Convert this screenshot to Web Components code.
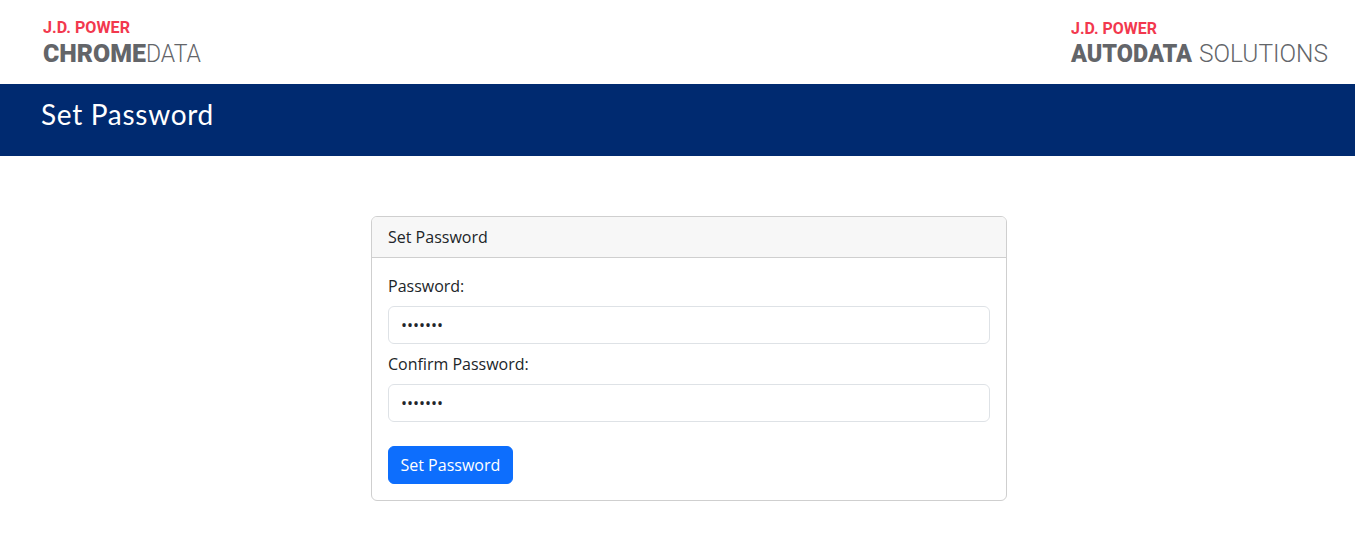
<!DOCTYPE html>
<html lang="en"><head><meta charset="utf-8"><title>Set Password</title>
<style>
html,body{margin:0;padding:0;background:#fff}
body{font:16px/24px "Open Sans",sans-serif;color:#212529}
</style></head><body>
<app-page>
  <site-logo slot="left" bold="CHROME" bold-w="103" light="DATA" light-w="55" gap="0" jd-w="87" drop="2"></site-logo>
  <site-logo slot="right" bold="AUTODATA" bold-w="121" light="SOLUTIONS" light-w="129" gap="7" jd-w="86" drop="1"></site-logo>
  <span slot="title">Set Password</span>
  <set-card heading="Set Password">
    <pw-field label="Password:"></pw-field>
    <pw-field label="Confirm Password:"></pw-field>
    <primary-button>Set Password</primary-button>
  </set-card>
</app-page>
<script>
const def=(name,html,setup)=>customElements.define(name,class extends HTMLElement{
  constructor(){super();this.attachShadow({mode:'open'}).innerHTML=html;}
  connectedCallback(){setup&&setup(this,this.shadowRoot);}
});
def('app-page',`<style>
:host{display:block}
.top{height:84px;display:flex;justify-content:space-between;align-items:flex-start;padding:0 27px 0 43px;box-sizing:border-box}
.top ::slotted([slot=left]){margin-top:18px}
.top ::slotted([slot=right]){margin-top:19px}
.banner{height:72px;background:#002a70;color:#fff;display:flex;align-items:center;padding:0 0 12px 41px;box-sizing:border-box;font:400 28px/36px Lato,sans-serif;letter-spacing:.7px}
.main{display:grid;grid-template-columns:636px;padding:60px 0 45px 371px}
</style>
<div class="top"><slot name="left"></slot><slot name="right"></slot></div>
<div class="banner"><slot name="title"></slot></div>
<div class="main"><slot></slot></div>`);
def('site-logo',`<style>
:host{display:block;font-family:Roboto,sans-serif;color:#636569}
.row{display:flex;white-space:nowrap}
.cell{display:block;overflow:visible}
.cell>span{display:inline-block;transform-origin:0 50%}
.jd{font-size:17px;line-height:18px;font-weight:700;color:#f2384e}
.p{font-size:26.5px;line-height:30px}
.b{font-weight:900}
.l{font-weight:300}
</style><div class="row jd"><div class="cell"><span>J.D. POWER</span></div></div><div class="row p"><div class="cell b"><span></span></div><div class="cell l"><span></span></div></div>`,(el,r)=>{
  const a=n=>el.getAttribute(n);
  const fit=(cell,w,txt)=>{
    const s=cell.firstElementChild;
    if(txt)s.textContent=txt;
    const n=s.getBoundingClientRect().width;
    cell.style.width=w+'px';
    s.style.transform='scaleX('+(w/n)+')';
  };
  fit(r.querySelector('.jd .cell'),+a('jd-w'));
  fit(r.querySelector('.b'),+a('bold-w'),a('bold'));
  fit(r.querySelector('.l'),+a('light-w'),a('light'));
  r.querySelector('.p').style.marginTop=a('drop')+'px';
  r.querySelector('.p').style.gap=a('gap')+'px';
});
def('set-card',`<style>
:host{display:block;border:1px solid #cfcfcf;border-radius:6px;overflow:hidden;background:#fff}
.h{padding:8px 16px;box-sizing:border-box;background:#f7f7f7;border-bottom:1px solid #cfcfcf;height:41px}
.b{padding:16px;display:flex;flex-direction:column}
</style><div class="h"></div><div class="b"><slot></slot></div>`,(el,r)=>{
  r.querySelector('.h').textContent=el.getAttribute('heading');
});
def('pw-field',`<style>
:host{display:flex;flex-direction:column;margin-bottom:8px}
label{display:block;margin-bottom:8px;line-height:24px}
input{display:block;box-sizing:border-box;width:100%;height:38px;padding:6px 12px;border:1px solid #dee2e6;border-radius:6px;font:16px/24px "Open Sans",sans-serif;color:#212529;background:#fff;outline:0;margin:0}
</style><label for="i"></label><input id="i" type="password" value="1234567">`,(el,r)=>{
  r.querySelector('label').textContent=el.getAttribute('label');
});
def('primary-button',`<style>
:host{display:block;margin-top:16px}
button{display:block;height:38px;padding:6px 11.5px;border:1px solid #0d6efd;border-radius:6px;background:#0d6efd;color:#fff;font:16px/24px "Open Sans",sans-serif;margin:0}
</style><button type="button"><slot></slot></button>`);
</script>
</body></html>
